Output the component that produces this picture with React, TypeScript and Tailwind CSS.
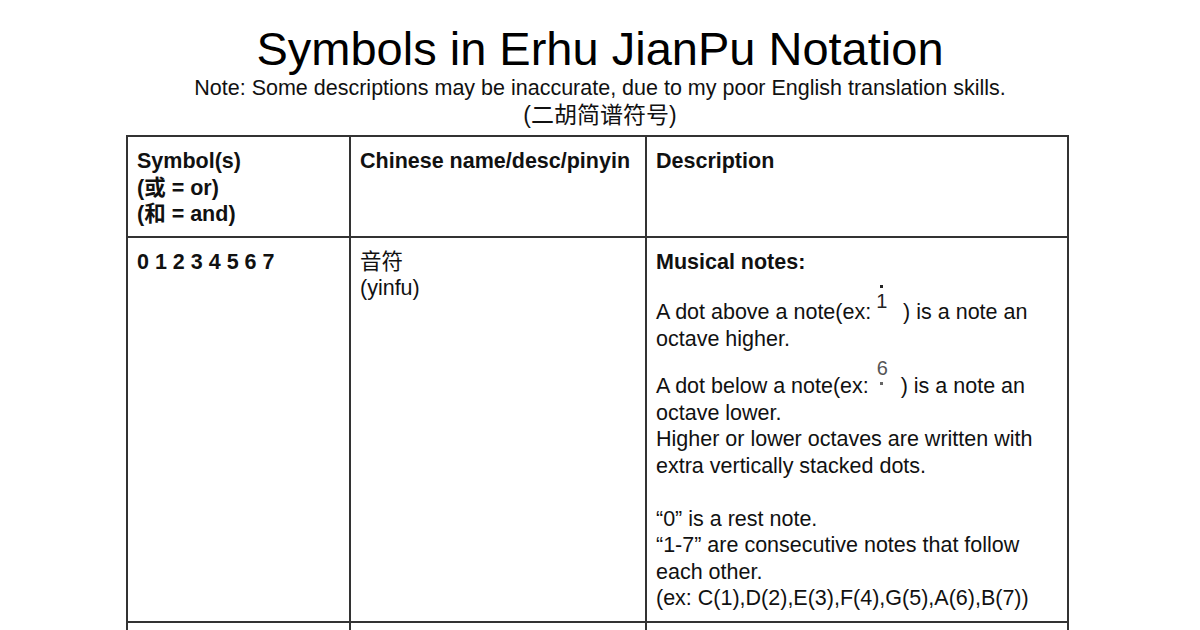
import React from 'react';

const font = { fontFamily: '"Liberation Sans", Arial, "Noto Sans CJK SC", sans-serif' };

// Jianpu note with an octave dot above it, sitting on the text baseline
const DotAbove = ({ n }: { n: string }) => (
  <span className="relative inline-block w-[20px] h-0 align-baseline">
    <span className="absolute left-[3px] top-[-34px] block w-[3px] h-[3px] bg-[#222]"></span>
    <span className="absolute left-[-1px] top-[-28px] text-[20px] leading-[20px] text-[#222]">{n}</span>
  </span>
);

// Jianpu note with an octave dot below it
const DotBelow = ({ n }: { n: string }) => (
  <span className="relative inline-block w-[20px] h-0 align-baseline">
    <span className="absolute left-[2px] top-[-35px] text-[20px] leading-[20px] text-[#555]">{n}</span>
    <span className="absolute left-[5px] top-[-11px] block w-[3px] h-[3px] bg-[#666]"></span>
  </span>
);

export default function App() {
  return (
    <div className="w-[1200px] h-[630px] overflow-hidden bg-white text-[#111]" style={font}>
      <div className="pt-[23px] text-center">
        <h1 className="text-[47px] leading-[52px] text-black">Symbols in Erhu JianPu Notation</h1>
        <p className="text-[21.5px] leading-[26px] text-[#111]">
          Note: Some descriptions may be inaccurate, due to my poor English translation skills.
        </p>
        <p className="text-[23px] leading-[28px] text-[#111]">(二胡简谱符号)</p>
      </div>

      <div className="ml-[126px] mt-[6px] w-[943px] border-t-[2px] border-l-[2px] border-[#333] text-[21.5px] leading-[26.5px]">
        <div className="grid grid-cols-[223px_296px_422px] border-b-[2px] border-[#333]">
          <div className="border-r-[2px] border-[#333] px-[9px] pt-[11px] pb-[8px] font-bold">
            <div>Symbol(s)</div>
            <div>(或 = or)</div>
            <div>(和 = and)</div>
          </div>
          <div className="border-r-[2px] border-[#333] px-[9px] pt-[11px] font-bold">
            Chinese name/desc/pinyin
          </div>
          <div className="border-r-[2px] border-[#333] px-[9px] pt-[11px] font-bold">Description</div>
        </div>

        <div className="grid grid-cols-[223px_296px_422px] border-b-[2px] border-[#333]">
          <div className="border-r-[2px] border-[#333] px-[9px] pt-[11px] font-bold">
            0 1 2 3 4 5 6 7
          </div>
          <div className="border-r-[2px] border-[#333] px-[9px] pt-[11px]">
            <div>音符</div>
            <div>(yinfu)</div>
          </div>
          <div className="border-r-[2px] border-[#333] px-[9px] pt-[11px] pb-[9px]">
            <div className="font-bold">Musical notes:</div>
            <div className="mt-[24px]">
              A dot above a note(ex: <DotAbove n="1" /> ) is a note an octave higher.
            </div>
            <div className="mt-[21px]">
              A dot below a note(ex: <DotBelow n="6" /> ) is a note an octave lower.
            </div>
            <div>Higher or lower octaves are written with extra vertically stacked dots.</div>
            <div className="mt-[26.5px]">“0” is a rest note.</div>
            <div>“1-7” are consecutive notes that follow each other.</div>
            <div>(ex: C(1),D(2),E(3),F(4),G(5),A(6),B(7))</div>
          </div>
        </div>

        <div className="grid grid-cols-[223px_296px_422px] h-[40px]">
          <div className="border-r-[2px] border-[#333]"></div>
          <div className="border-r-[2px] border-[#333]"></div>
          <div className="border-r-[2px] border-[#333]"></div>
        </div>
      </div>
    </div>
  );
}
